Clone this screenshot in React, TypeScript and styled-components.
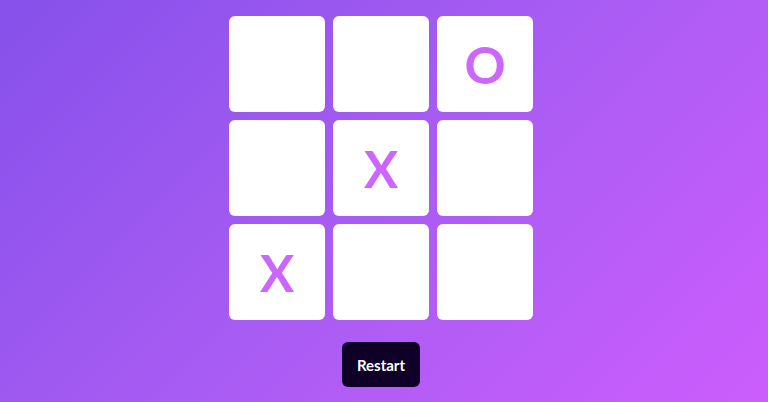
import React, { useState } from 'react'
import styled, { createGlobalStyle } from 'styled-components'

const GlobalStyle = createGlobalStyle`
  html, body {
    margin: 0;
    padding: 0;
    height: 100%;
  }
  body {
    font-family: Lato, "Liberation Sans", sans-serif;
  }
  #root {
    min-height: 100%;
  }
`

const Page = styled.main`
  min-height: 100vh;
  box-sizing: border-box;
  padding: 16px 6px 0 0;
  display: flex;
  flex-direction: column;
  align-items: center;
  gap: 22px;
  background: linear-gradient(135deg, #8650ea 0%, #a85cf3 50%, #cc5dfd 100%);
`

const Board = styled.div`
  display: grid;
  grid-template-columns: repeat(3, 96px);
  grid-template-rows: repeat(3, 96px);
  gap: 8px;
`

const Cell = styled.button<{ $mark: string }>`
  border: none;
  padding: 0;
  border-radius: 6px;
  background: #ffffff;
  color: #cc66ff;
  font-family: Lato, "Liberation Sans", sans-serif;
  font-size: 51px;
  font-weight: 700;
  line-height: 1;
  display: flex;
  align-items: center;
  justify-content: center;
  cursor: ${(p) => (p.$mark ? 'default' : 'pointer')};
`

const RestartButton = styled.button`
  height: 45px;
  width: 78px;
  padding: 0;
  border: none;
  border-radius: 6px;
  background: #0e0026;
  color: #ffffff;
  font-family: Lato, "Liberation Sans", sans-serif;
  font-size: 15px;
  font-weight: 700;
  cursor: pointer;
`

const start = ['', '', 'O', '', 'X', '', 'X', '', '']

const App: React.FC = () => {
  const [cells, setCells] = useState<string[]>(start)

  const play = (i: number) => {
    if (cells[i]) return
    const xs = cells.filter((c) => c === 'X').length
    const os = cells.filter((c) => c === 'O').length
    const next = [...cells]
    next[i] = xs > os ? 'O' : 'X'
    setCells(next)
  }

  return (
    <>
      <GlobalStyle />
      <Page>
        <Board>
          {cells.map((mark, i) => (
            <Cell key={i} $mark={mark} onClick={() => play(i)}>
              {mark}
            </Cell>
          ))}
        </Board>
        <RestartButton onClick={() => setCells(Array(9).fill(''))}>Restart</RestartButton>
      </Page>
    </>
  )
}

export default App
